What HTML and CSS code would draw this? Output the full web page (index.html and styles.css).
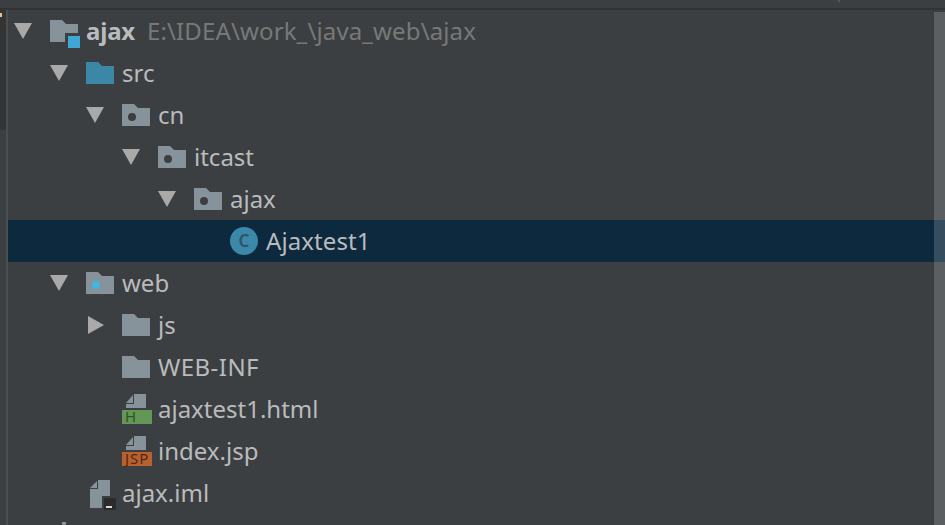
FILE: index.html
```html
<!DOCTYPE html>
<html>
    <head>
    <meta charset="utf-8">
    <title>Project tree</title>
    <link rel="stylesheet" href="styles.css">
    </head>
    <body>
    <div class="topbar"><div class="top-mark"></div></div>
    <div class="main">
        <div class="gutter">
            <div class="gutter-dark"><div class="gutter-mark"></div></div>
        </div>
        <div class="tree">
            <div class="row level0">
                <svg class="arrow" viewBox="0 0 18 16"><path d="M0 0H18L9 16Z"/></svg>
                <svg class="icon" viewBox="0 0 28 22"><path class="folder" d="M0 0H12L16 4H28V13H15V22H0Z"/><rect class="module" x="18" y="16" width="12" height="12"/></svg>
                <span class="name bold">ajax</span>
                <span class="path">E:\IDEA\work_\java_web\ajax</span>
            </div>
            <div class="row level1">
                <svg class="arrow" viewBox="0 0 18 16"><path d="M0 0H18L9 16Z"/></svg>
                <svg class="icon" viewBox="0 0 28 22"><path class="folder-src" d="M0 0H12L16 4H28V22H0Z"/></svg>
                <span class="name">src</span>
            </div>
            <div class="row level2">
                <svg class="arrow" viewBox="0 0 18 16"><path d="M0 0H18L9 16Z"/></svg>
                <svg class="icon" viewBox="0 0 28 22"><path class="folder" d="M0 0H12L16 4H28V22H0Z"/><circle class="dot" cx="10" cy="13" r="4"/></svg>
                <span class="name">cn</span>
            </div>
            <div class="row level3">
                <svg class="arrow" viewBox="0 0 18 16"><path d="M0 0H18L9 16Z"/></svg>
                <svg class="icon" viewBox="0 0 28 22"><path class="folder" d="M0 0H12L16 4H28V22H0Z"/><circle class="dot" cx="10" cy="13" r="4"/></svg>
                <span class="name">itcast</span>
            </div>
            <div class="row level4">
                <svg class="arrow" viewBox="0 0 18 16"><path d="M0 0H18L9 16Z"/></svg>
                <svg class="icon" viewBox="0 0 28 22"><path class="folder" d="M0 0H12L16 4H28V22H0Z"/><circle class="dot" cx="10" cy="13" r="4"/></svg>
                <span class="name">ajax</span>
            </div>
            <div class="row level5 selected">
                <span class="arrow"></span>
                <div class="class-icon">C</div>
                <span class="name wide">Ajaxtest1</span>
            </div>
            <div class="row level1">
                <svg class="arrow" viewBox="0 0 18 16"><path d="M0 0H18L9 16Z"/></svg>
                <svg class="icon" viewBox="0 0 28 22"><path class="folder" d="M0 0H12L16 4H28V22H0Z"/><circle class="dot-web" cx="10" cy="13" r="4"/></svg>
                <span class="name">web</span>
            </div>
            <div class="row level2">
                <svg class="arrow arrow-right" viewBox="0 0 18 18"><path d="M2 0L18 9L2 18Z"/></svg>
                <svg class="icon" viewBox="0 0 28 22"><path class="folder" d="M0 0H12L16 4H28V22H0Z"/></svg>
                <span class="name">js</span>
            </div>
            <div class="row level2">
                <span class="arrow"></span>
                <svg class="icon" viewBox="0 0 28 22"><path class="folder" d="M0 0H12L16 4H28V22H0Z"/></svg>
                <span class="name caps">WEB-INF</span>
            </div>
            <div class="row level2">
                <span class="arrow"></span>
                <div class="file-icon">
                    <svg class="file" viewBox="0 0 20 14"><path class="folder" d="M8 0H20V14H0V10H8Z"/><path class="folder" d="M0 9L7 1V9Z"/></svg>
                    <div class="tag tag-html">H</div>
                </div>
                <span class="name">ajaxtest1.html</span>
            </div>
            <div class="row level2">
                <span class="arrow"></span>
                <div class="file-icon">
                    <svg class="file" viewBox="0 0 20 14"><path class="folder" d="M8 0H20V14H0V10H8Z"/><path class="folder" d="M0 9L7 1V9Z"/></svg>
                    <div class="tag tag-jsp">JSP</div>
                </div>
                <span class="name">index.jsp</span>
            </div>
            <div class="row level1">
                <span class="arrow"></span>
                <svg class="icon iml" viewBox="-4 0 28 30">
                    <path class="folder" d="M0 8L7 1V8Z"/>
                    <path class="folder" d="M8 0H20V16H12V28H0V9H8Z"/>
                    <rect class="iml-box" x="14" y="18" width="12" height="12"/>
                    <rect class="iml-dash" x="16" y="26" width="6" height="2"/>
                </svg>
                <span class="name">ajax.iml</span>
            </div>
            <div class="next-row"><div class="next-mark"></div></div>
        </div>
    </div>
    <div class="scrollbar"></div>
</body>
</html>
```

FILE: styles.css
```css
html, body
{
    margin: 0;
    padding: 0;
    height: 100%;
    overflow: hidden;
}

body
{
    background-color: #3c3f41;
    font-family: "Noto Sans", sans-serif;
    font-size: 24px;
    color: #b9bbbd;
}

.topbar
{
    height: 8px;
    border-bottom: 2px solid #323232;
}

.top-mark
{
    width: 2px;
    height: 2px;
    margin-left: 838px;
    background-color: #55585a;
}

.main
{
    display: flex;
}

.gutter
{
    width: 6px;
    border-right: 2px solid #4b4d4e;
    height: 515px;
}

.gutter-dark
{
    height: 117px;
    background-color: #323436;
    padding-top: 3px;
}

.gutter-mark
{
    width: 2px;
    height: 4px;
    background-color: #e8c080;
}

.tree
{
    flex: 1;
}

.row
{
    height: 42px;
    display: flex;
    align-items: center;
}

.level0 { padding-left: 6px; }
.level1 { padding-left: 42px; }
.level2 { padding-left: 78px; }
.level3 { padding-left: 114px; }
.level4 { padding-left: 150px; }
.level5 { padding-left: 186px; }

.selected
{
    background-color: #0d293e;
}

.arrow
{
    width: 18px;
    height: 16px;
    margin-right: 18px;
    flex-shrink: 0;
    fill: #a9a9a9;
}

.arrow-right
{
    height: 18px;
}

.icon
{
    width: 28px;
    height: 22px;
    margin-right: 8px;
    overflow: visible;
    flex-shrink: 0;
}

.folder { fill: #87939a; }
.folder-src { fill: #3d87a6; }
.dot { fill: #3c3f41; }
.dot-web { fill: #40b6e0; }
.module { fill: #3ea8d5; }

.iml
{
    height: 30px;
    margin-top: 4px;
}

.iml-box { fill: #2b2b2b; }
.iml-dash { fill: #d8d8d8; }

.class-icon
{
    width: 28px;
    height: 28px;
    margin-right: 8px;
    border-radius: 50%;
    background-color: #3b88a8;
    color: #2f5468;
    font-size: 17px;
    font-weight: 600;
    line-height: 28px;
    text-align: center;
    flex-shrink: 0;
}

.file-icon
{
    width: 30px;
    margin-right: 6px;
    flex-shrink: 0;
    display: flex;
    flex-direction: column;
    align-items: flex-start;
    gap: 2px;
}

.file
{
    width: 20px;
    height: 14px;
    margin-left: 4px;
}

.tag
{
    width: 30px;
    height: 14px;
    font-size: 15px;
    line-height: 13px;
    padding-left: 3px;
    box-sizing: border-box;
}

.tag-html
{
    background-color: #629755;
    color: #33502d;
}

.tag-jsp
{
    background-color: #b9602f;
    color: #4e2a16;
    letter-spacing: 1px;
}

.name
{
    white-space: nowrap;
    padding-bottom: 2px;
}

.caps
{
    letter-spacing: 0.45px;
}

.wide
{
    letter-spacing: 0.1px;
}

.bold
{
    font-weight: 700;
    letter-spacing: -0.2px;
}

.path
{
    margin-left: 12px;
    padding-bottom: 2px;
    color: #787878;
    white-space: nowrap;
    letter-spacing: 0.13px;
}

.next-row
{
    height: 11px;
}

.next-mark
{
    width: 4px;
    height: 3px;
    margin-left: 54px;
    position: relative;
    top: 8px;
    background-color: #87939a;
}

.scrollbar
{
    position: absolute;
    top: 12px;
    right: 0;
    bottom: 0;
    width: 11px;
    background-color: rgba(255, 255, 255, 0.17);
}
```
